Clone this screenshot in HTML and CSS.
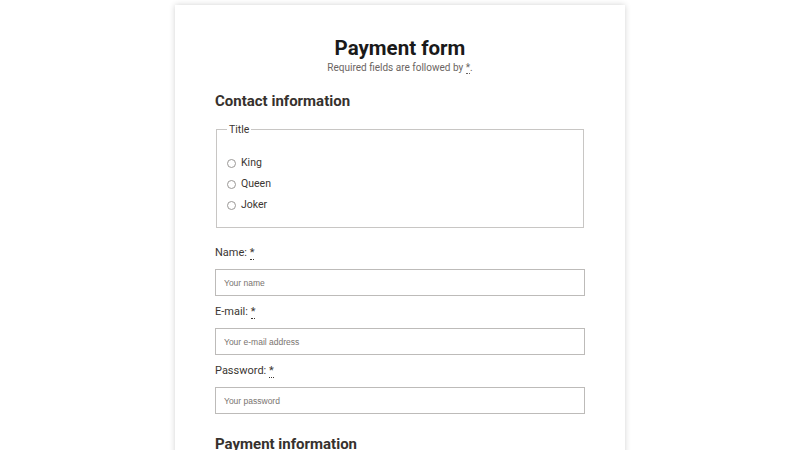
FILE: index.html
```html
<!DOCTYPE html>
<html lang="en">
<head>
<meta charset="utf-8">
<title>Payment form</title>
<link rel="stylesheet" href="styles.css">
</head>
<body>
<form class="card">
  <h1 class="title">Payment form</h1>
  <p class="subtitle">Required fields are followed by <abbr title="required">*</abbr>.</p>
  <section class="section">
    <h2 class="section-title">Contact information</h2>
    <fieldset class="choices">
      <legend class="legend">Title</legend>
      <ul class="choice-list">
        <li class="choice"><input type="radio" name="title" id="king" class="radio"><label for="king">King</label></li>
        <li class="choice"><input type="radio" name="title" id="queen" class="radio"><label for="queen">Queen</label></li>
        <li class="choice"><input type="radio" name="title" id="joker" class="radio"><label for="joker">Joker</label></li>
      </ul>
    </fieldset>
    <div class="field">
      <label class="label" for="name">Name: <abbr title="required">*</abbr></label>
      <input class="input" type="text" id="name" placeholder="Your name">
    </div>
    <div class="field">
      <label class="label" for="mail">E-mail: <abbr title="required">*</abbr></label>
      <input class="input" type="email" id="mail" placeholder="Your e-mail address">
    </div>
    <div class="field">
      <label class="label" for="pwd">Password: <abbr title="required">*</abbr></label>
      <input class="input" type="password" id="pwd" placeholder="Your password">
    </div>
  </section>
  <section class="section">
    <h2 class="section-title">Payment information</h2>
  </section>
</form>
</body>
</html>
```

FILE: styles.css
```css
html, body {
  margin: 0;
  padding: 0;
  background: #ffffff;
  font-family: Roboto, "Liberation Sans", sans-serif;
  color: #3b3632;
}
.card {
  width: 450px;
  box-sizing: border-box;
  margin: 5px auto 0;
  padding: 31px 40px 40px;
  background: #fff;
  box-shadow: 0 0 6px rgba(0, 0, 0, 0.18);
  min-height: 600px;
}
.title {
  margin: 0;
  text-align: center;
  font-size: 20.5px;
  font-weight: 700;
  color: #1a1a1a;
  line-height: 24px;
}
.subtitle {
  margin: 1px 0 0;
  text-align: center;
  font-size: 10px;
  color: #6b6562;
  line-height: 14px;
}
abbr {
  text-decoration: none;
  border-bottom: 1px dotted currentColor;
  color: inherit;
}
.section {
  margin-top: 16px;
}
.section + .section {
  margin-top: 20px;
}
.section-title {
  margin: 0 0 12px;
  font-size: 15px;
  font-weight: 700;
  color: #36312d;
  line-height: 20px;
}
.choices {
  margin: 0 1px;
  padding: 0 10px 14px;
  border: 1px solid #c8c6c4;
}
.legend {
  padding: 0 2px;
  font-size: 10.5px;
  color: #3b3632;
  line-height: 13px;
}
.choice-list {
  list-style: none;
  margin: 19px 0 0;
  padding: 0;
  display: flex;
  flex-direction: column;
  gap: 5px;
}
.choice {
  display: flex;
  align-items: center;
  gap: 5px;
  font-size: 10.5px;
  line-height: 16px;
  color: #3b3632;
}
.radio {
  appearance: none;
  margin: 0;
  width: 9px;
  height: 9px;
  border: 1px solid #9a9896;
  border-radius: 50%;
  background: #fff;
}
.field {
  margin-top: 8px;
  display: flex;
  flex-direction: column;
  gap: 8px;
}
.choices + .field {
  margin-top: 17px;
}
.label {
  font-size: 11px;
  line-height: 16px;
  color: #3b3632;
}
.input {
  margin: 0;
  height: 27px;
  box-sizing: border-box;
  border: 1px solid #bdbbb9;
  padding: 0 8px;
  font-family: "Liberation Sans", Arial, sans-serif;
  font-size: 8.5px;
  color: #3b3632;
}
.input::placeholder {
  color: #7a7470;
}
```
